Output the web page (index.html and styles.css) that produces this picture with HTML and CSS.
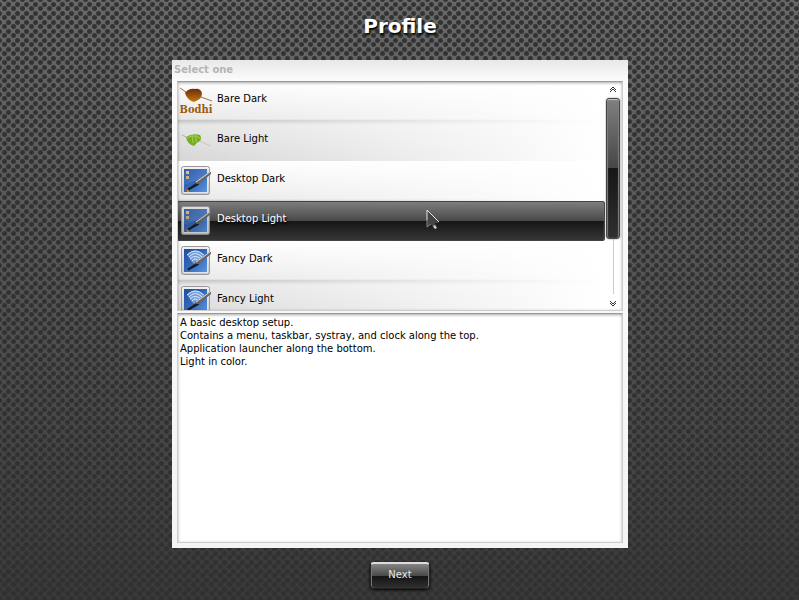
FILE: index.html
```html
<!DOCTYPE html>
<html lang="en">
<head>
  <meta charset="UTF-8">
  <meta name="viewport" content="width=device-width, initial-scale=1.0">
  <title>Profile</title>
  <link rel="stylesheet" href="styles.css">
</head>
<body>

  <svg class="defs" aria-hidden="true">
    <defs>
      <linearGradient id="blue" x1="0" y1="0" x2="1" y2="1">
        <stop offset="0" stop-color="#1d4c9c"/>
        <stop offset="0.5" stop-color="#3468bd"/>
        <stop offset="1" stop-color="#5b93e0"/>
      </linearGradient>
      <linearGradient id="brown" x1="0" y1="0" x2="0" y2="1">
        <stop offset="0" stop-color="#6b2c08"/>
        <stop offset="1" stop-color="#c4790f"/>
      </linearGradient>
      <linearGradient id="frame" x1="0" y1="0" x2="0" y2="1">
        <stop offset="0" stop-color="#f2f2f2"/>
        <stop offset="1" stop-color="#c9c9c9"/>
      </linearGradient>
      <g id="base">
        <rect x="1.5" y="1.5" width="28" height="28" rx="2" fill="url(#frame)" stroke="#999"/>
        <rect x="4" y="4" width="24" height="24" fill="#dfe6f0"/>
        <rect x="4" y="4" width="23" height="23" fill="url(#blue)"/>
      </g>
      <g id="pen">
        <path d="M7 24L16 18L18 20L9 25Z" fill="#222"/>
        <path d="M15 17L29 7L31 7L31 9L18 20Z" fill="#686868"/>
        <path d="M16 17L30 7" stroke="#e0e0e0" stroke-width="1"/>
        <path d="M8 25L19 19" stroke="#111" stroke-width="1"/>
      </g>
      <g id="desktop">
        <use href="#base"/>
        <path d="M4 4H27V11L4 20Z" fill="#fff" fill-opacity="0.1"/>
        <rect x="6" y="6" width="3" height="3" fill="#e8c074"/>
        <rect x="6" y="11" width="3" height="3" fill="#c9b58b"/>
        <rect x="5" y="24" width="2" height="3" fill="#d33a2c"/>
        <rect x="7" y="24" width="2" height="3" fill="#6fc02c"/>
        <use href="#pen"/>
      </g>
      <g id="fancy">
        <use href="#base"/>
        <path d="M7 10Q15 1 24 10L19 17Q15 21 12 17Z" fill="#9fc2f0" fill-opacity="0.6"/>
        <path d="M7 10Q15 2 24 10M9 12Q15 5 22 12M10 14Q15 9 21 14M12 16Q15 12 19 16" fill="none" stroke="#e4effc" stroke-width="1"/>
        <use href="#pen"/>
      </g>
    </defs>
  </svg>

  <header class="header">
    <h1>Profile</h1>
  </header>

  <main class="panel">
    <h2 class="panel-title">Select one</h2>

    <div class="frame">
      <ul class="profiles">
        <li>
          <button class="profile">
            <svg class="icon" viewBox="0 0 32 32">
              <path d="M0 3L6 7M21 12L32 16" fill="none" stroke="#a8712c" stroke-width="1"/>
              <path d="M5 8Q9 3 15 4Q20 3 22 8Q22 13 18 15L14 17Q7 15 5 8Z" fill="url(#brown)"/>
              <text class="bodhi" x="16" y="28" text-anchor="middle">Bodhi</text>
            </svg>
            Bare Dark
          </button>
        </li>
        <li>
          <button class="profile">
            <svg class="icon" viewBox="0 0 32 32">
              <path d="M2 10L8 13" stroke="#a9b98c" stroke-width="1"/>
              <path d="M20 16L30 21" stroke="#c5c5b4" stroke-width="1"/>
              <path d="M6 12Q12 8 20 10Q22 13 20 16Q17 17 14 21Q7 19 6 12Z" fill="#78ac20"/>
              <path d="M7 13Q13 9 20 13M12 10L13 18M16 10L16 17" fill="none" stroke="#a4ce52" stroke-width="1"/>
            </svg>
            Bare Light
          </button>
        </li>
        <li>
          <button class="profile">
            <svg class="icon" viewBox="0 0 32 32"><use href="#desktop"/></svg>
            Desktop Dark
          </button>
        </li>
        <li>
          <button class="profile selected">
            <svg class="icon" viewBox="0 0 32 32"><use href="#desktop"/></svg>
            Desktop Light
          </button>
          <svg class="cursor" viewBox="0 0 16 24">
            <path d="M2 2V19L6 16L9 21L12 20L10 15H14Z" fill="#444"/>
            <path d="M2 12V2L14 14" fill="none" stroke="#e8e8e8" stroke-width="1"/>
            <path d="M2 12V19L6 16" fill="none" stroke="#888"/>
            <path d="M8 18L10 21L12 20L10 17" fill="#ccc"/>
          </svg>
        </li>
        <li>
          <button class="profile">
            <svg class="icon" viewBox="0 0 32 32"><use href="#fancy"/></svg>
            Fancy Dark
          </button>
        </li>
        <li>
          <button class="profile">
            <svg class="icon" viewBox="0 0 32 32"><use href="#fancy"/></svg>
            Fancy Light
          </button>
        </li>
      </ul>

      <div class="scrollbar">
        <button class="arrow" aria-label="Scroll up">
          <svg viewBox="0 0 8 6"><path d="M1 3L4 0L7 3M1 5L4 2L7 5" fill="none" stroke="#333"/></svg>
        </button>
        <div class="track">
          <div class="thumb"></div>
        </div>
        <button class="arrow" aria-label="Scroll down">
          <svg viewBox="0 0 8 6"><path d="M1 1L4 4L7 1M1 3L4 6L7 3" fill="none" stroke="#333"/></svg>
        </button>
      </div>
    </div>

    <div class="frame">
      <textarea class="description" aria-label="Description" readonly>A basic desktop setup.
Contains a menu, taskbar, systray, and clock along the top.
Application launcher along the bottom.
Light in color.</textarea>
    </div>
  </main>

  <footer class="footer">
    <button class="next">Next</button>
  </footer>

</body>
</html>
```
FILE: styles.css
```css
* {
  box-sizing: border-box;
}

body {
  margin: 0;
  padding-left: 1px;
  height: 100vh;
  display: flex;
  flex-direction: column;
  align-items: center;
  font-family: "DejaVu Sans", sans-serif;
  font-size: 10px;
  line-height: 13px;
  color: #000;
  /* metal mesh, darker towards the bottom */
  background:
    linear-gradient(rgba(48, 48, 48, 0), rgba(48, 48, 48, 0.4) 50%, rgba(48, 48, 48, 0.85)),
    radial-gradient(circle at 50% 50%, rgba(42, 42, 42, 0.9) 0, rgba(42, 42, 42, 0.8) 2px, rgba(42, 42, 42, 0) 3px) 4px 0 / 9px 9px,
    radial-gradient(circle at 50% 50%, rgba(42, 42, 42, 0.9) 0, rgba(42, 42, 42, 0.8) 2px, rgba(42, 42, 42, 0) 3px) 0 4px / 9px 9px,
    #686868;
}

button,
textarea {
  font: inherit;
  color: inherit;
  border: none;
  padding: 0;
}

.defs {
  position: absolute;
  width: 0;
  height: 0;
}

.header {
  height: 60px;
  padding-top: 13px;
}

h1 {
  margin: 0;
  font-size: 20px;
  line-height: 26px;
  color: #fff;
  text-shadow: 1px 2px 2px #000;
}

.panel {
  flex: 1;
  min-height: 0;
  width: 57%;
  min-width: 456px;
  padding: 0 5px 5px;
  display: flex;
  flex-direction: column;
  gap: 2px;
  background: linear-gradient(#e9e7e9, #fbfbfb 20px, #f4f4f4);
}

.panel-title {
  margin: 0 -3px;
  height: 19px;
  padding-top: 3px;
  font-size: 10px;
  line-height: 13px;
  color: #b5b5b5;
}

.frame {
  position: relative;
  flex: 1;
  min-height: 0;
  display: flex;
  background: #fff;
}

/* inner shadow drawn over the rows */
.frame::after {
  content: "";
  position: absolute;
  inset: 0;
  border: 1px solid #ccc;
  border-top-color: #999;
  box-shadow: inset 0 1px 3px rgba(0, 0, 0, 0.35);
  pointer-events: none;
}

.profiles {
  flex: 1;
  margin: 0;
  padding: 0;
  list-style: none;
  overflow-y: auto;
  scrollbar-width: none;
}

.profiles li {
  position: relative;
}

.profile {
  display: flex;
  align-items: center;
  gap: 5px;
  width: 100%;
  height: 40px;
  padding: 0 3px 6px;
  text-align: left;
  background:
    linear-gradient(to right, rgba(255, 255, 255, 0), #fff),
    linear-gradient(#fff, #e8e8e8 38px, #bbb);
}

li:nth-child(even) .profile {
  background:
    linear-gradient(to right, rgba(255, 255, 255, 0), #fff),
    linear-gradient(#c8c8c8, #e6e6e6 4px, #d6d6d6);
}

.icon {
  flex: none;
  width: 32px;
  height: 32px;
  margin-top: 6px;
}

.bodhi {
  font: bold 11px "DejaVu Serif Condensed", "DejaVu Serif", serif;
  fill: #9c5a0c;
}

li .profile.selected,
li:nth-child(even) .profile.selected {
  color: #fff;
  text-shadow: 1px 2px 2px #000;
  border-radius: 3px;
  background: linear-gradient(#808080, #484848 20px, #151515 20px, #383838);
  box-shadow: inset 0 0 0 1px #444, inset 0 2px 0 -1px #aaa, inset -2px 0 1px -1px #aaa;
}

.selected .icon {
  opacity: 0.85;
}

.cursor {
  position: absolute;
  left: 58%;
  top: 7px;
  width: 16px;
  height: 24px;
}

.scrollbar {
  flex: none;
  display: flex;
  flex-direction: column;
  align-items: center;
  width: 18px;
  padding-right: 2px;
}

.arrow {
  display: flex;
  align-items: center;
  justify-content: center;
  width: 16px;
  height: 17px;
  background: none;
}

.arrow svg {
  width: 8px;
  height: 6px;
}

.track {
  flex: 1;
  width: 14px;
  background: linear-gradient(#ccc, #ccc) center / 1px 100% no-repeat;
}

.thumb {
  height: 72%;
  border: 1px solid #444;
  border-radius: 3px;
  background: linear-gradient(#808080, #464646 50%, #161616 50%, #303030);
  box-shadow: inset 0 1px 1px #ccc, inset 1px 0 1px #777, inset -1px 0 1px #777, 0 0 2px #888;
}

.description {
  flex: 1;
  padding: 3px;
  resize: none;
  outline: none;
  background: #fff;
}

.footer {
  height: 52px;
  padding-top: 14px;
}

.next {
  width: 60px;
  height: 27px;
  padding-bottom: 3px;
  color: #e8e8e8;
  border: 1px solid #222;
  border-top: 2px solid #ddd;
  border-radius: 4px;
  background: linear-gradient(#858585, #484848 50%, #141414 50%, #303030);
  box-shadow: inset 1px 0 0 #777, inset -1px 0 0 #777, 0 1px 3px #000;
}
```
